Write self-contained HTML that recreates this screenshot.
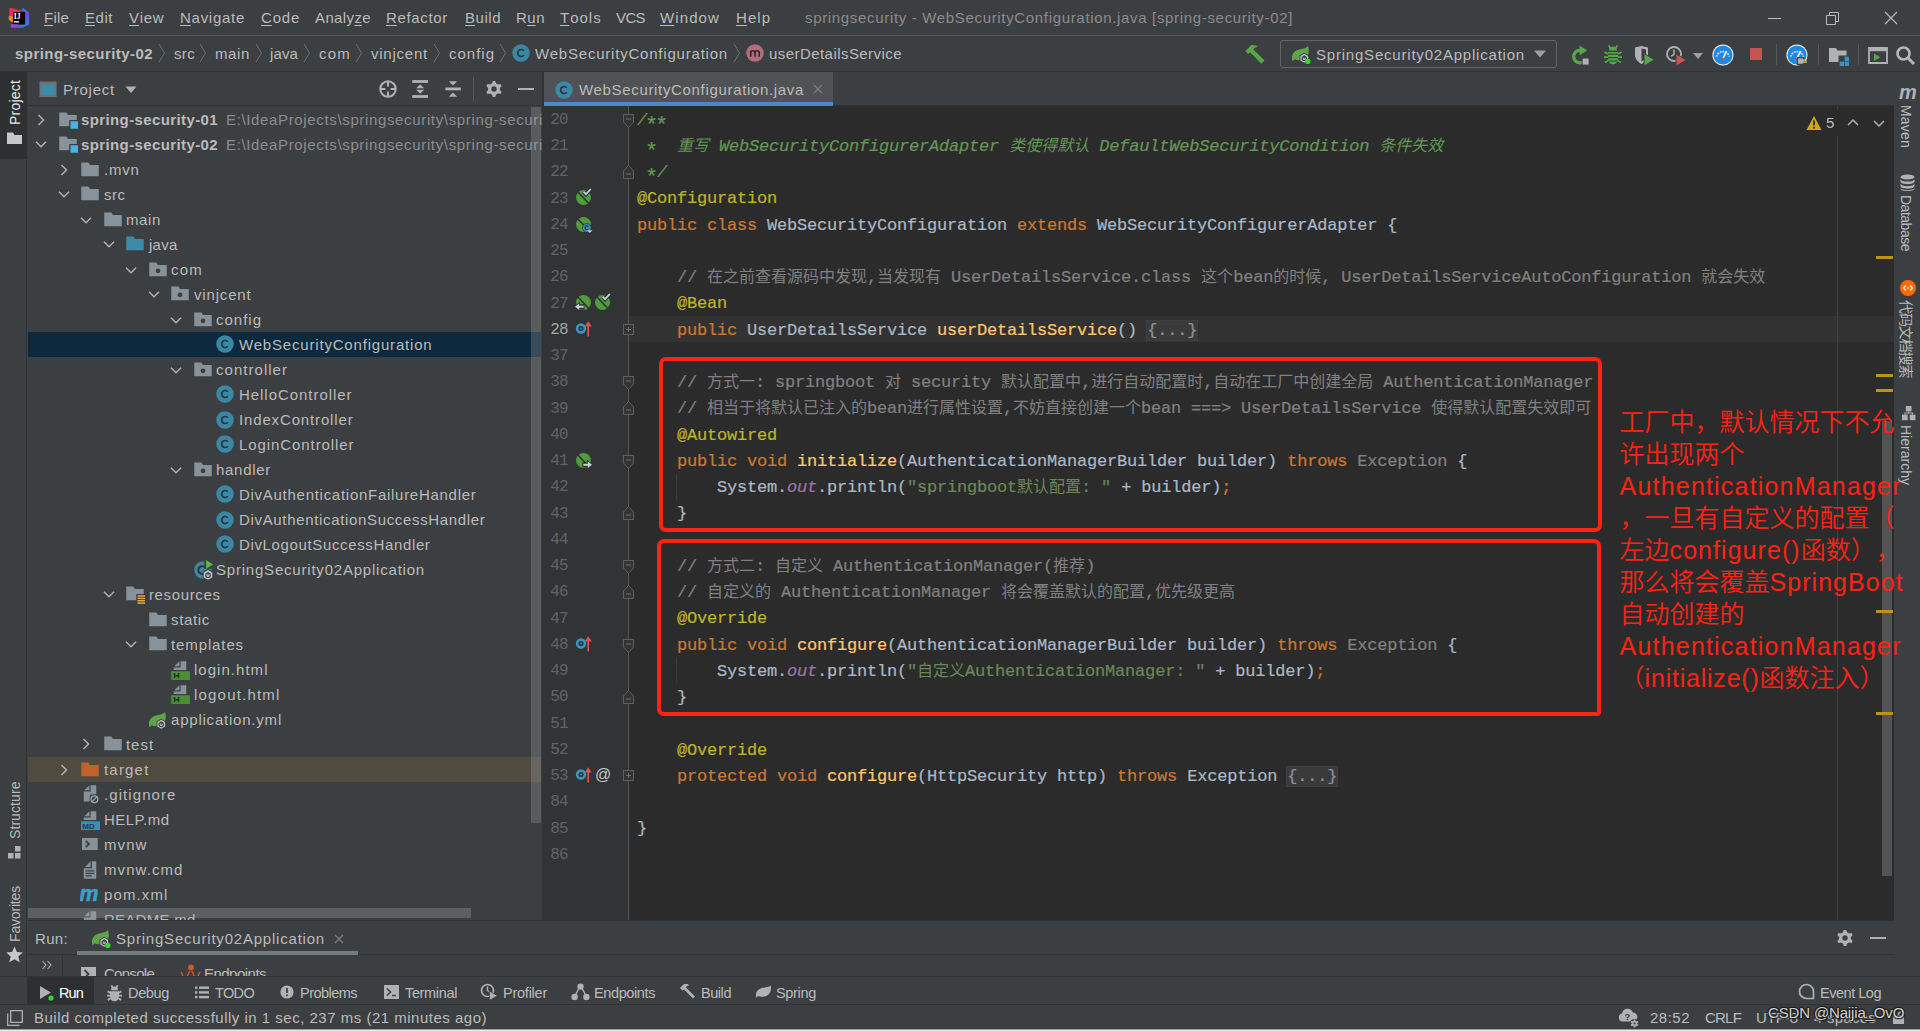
<!DOCTYPE html>
<html lang="zh"><head><meta charset="utf-8"><title>springsecurity - WebSecurityConfiguration.java</title>
<style>
html,body{margin:0;padding:0;background:#3c3f41;}
body{width:1920px;height:1031px;overflow:hidden;font-family:"Liberation Sans","Noto Sans CJK SC",sans-serif;color:#bbbbbb;}
#app{position:relative;width:1920px;height:1031px;overflow:hidden;background:#3c3f41;}
.b{position:absolute;display:block;}
.t{position:absolute;white-space:pre;display:block;}
.code{position:absolute;white-space:pre;font-family:"Liberation Mono","Noto Sans CJK SC",monospace;font-size:17px;letter-spacing:-0.2px;line-height:26px;color:#a9b7c6;}
.code .c{font-family:"Noto Sans CJK SC",sans-serif;font-size:16px;letter-spacing:0;}
.k{color:#cc7832}.a{color:#bbb529}.m{color:#ffc66d}.cm{color:#808080}.dc{color:#629755;font-style:italic}.s{color:#6a8759}.sf{color:#9876aa;font-style:italic}
.ln{position:absolute;font-family:"Liberation Mono",monospace;font-size:16px;letter-spacing:-1.0px;line-height:26px;color:#606366;text-align:right;width:40px;}
.clip{position:absolute;overflow:hidden;}
.code .c{line-height:1px}
.note{text-spacing-trim:space-all;font-kerning:none;font-family:"Liberation Sans","Noto Sans CJK SC",sans-serif;font-weight:350;font-size:25px;line-height:32px;color:#ff2314;}
.note .nl{letter-spacing:1.15px}
.code .ast{font-size:22px;letter-spacing:-3.2px;margin-left:-2px;margin-right:2px;position:relative;top:7px;line-height:1px;font-style:normal}
.code{-webkit-text-stroke:0.22px currentColor}
.code .c{-webkit-text-stroke:0}

</style></head><body>
<div id="app">
<div class="b" style="left:0px;top:0px;width:1920px;height:35px;background:#3c3f41;"></div>
<div class="b" style="left:0px;top:35px;width:1920px;height:1px;background:#555555;"></div>
<svg class="b" style="left:8px;top:7px;" width="22" height="22" viewBox="8 7 22 22"><defs><linearGradient id="lgb" x1="0" y1="0" x2="0.3" y2="1"><stop offset="0" stop-color="#3b7cf5"/><stop offset="0.5" stop-color="#6a4fe0"/><stop offset="1" stop-color="#2a7cf7"/></linearGradient>
<linearGradient id="lgp" x1="0" y1="0" x2="1" y2="0"><stop offset="0" stop-color="#b03ad8"/><stop offset="1" stop-color="#5b55ee"/></linearGradient></defs>
<path d="M9.2,8.4 L11.4,8 L20.8,10.4 L20.8,12 L13.6,16.6 L9.6,16.8 Z" fill="#fe2857"/>
<path d="M9,15.4 L8.6,19.6 L11.4,22 L13.4,21.6 L13.4,16.6 Z" fill="#fc801d"/>
<path d="M21,10.2 L23,8 L29,12.6 L29.2,24.4 L21.6,28 L17.6,25.6 L25.2,24.4 L25.2,12.2 Z" fill="url(#lgb)"/>
<path d="M11.2,24 L10.8,27.4 L21.6,28 L17.6,24 Z" fill="url(#lgp)"/>
<rect x="13" y="12.2" width="12" height="12" fill="#000"/><rect x="14" y="21.1" width="5" height="1.5" fill="#e8e8e8"/>
<text x="13.7" y="18.6" font-family="Liberation Serif,serif" font-size="7.6" font-weight="bold" fill="#fff">IJ</text></svg>
<span class="t" style="left:44px;top:7.2px;line-height:22px;font-size:15px;letter-spacing:0.207px;text-underline-offset:1.5px"><u style="letter-spacing:0;margin-right:0.207px">F</u>ile</span>
<span class="t" style="left:85px;top:7.2px;line-height:22px;font-size:15px;letter-spacing:0.538px;text-underline-offset:1.5px"><u style="letter-spacing:0;margin-right:0.538px">E</u>dit</span>
<span class="t" style="left:129px;top:7.2px;line-height:22px;font-size:15px;letter-spacing:0.690px;text-underline-offset:1.5px"><u style="letter-spacing:0;margin-right:0.690px">V</u>iew</span>
<span class="t" style="left:180px;top:7.2px;line-height:22px;font-size:15px;letter-spacing:0.725px;text-underline-offset:1.5px"><u style="letter-spacing:0;margin-right:0.725px">N</u>avigate</span>
<span class="t" style="left:261px;top:7.2px;line-height:22px;font-size:15px;letter-spacing:0.785px;text-underline-offset:1.5px"><u style="letter-spacing:0;margin-right:0.785px">C</u>ode</span>
<span class="t" style="left:315px;top:7.2px;line-height:22px;font-size:15px;letter-spacing:0.376px;text-underline-offset:1.5px">Analy<u style="letter-spacing:0;margin-right:0.376px">z</u>e</span>
<span class="t" style="left:386px;top:7.2px;line-height:22px;font-size:15px;letter-spacing:0.664px;text-underline-offset:1.5px"><u style="letter-spacing:0;margin-right:0.664px">R</u>efactor</span>
<span class="t" style="left:465px;top:7.2px;line-height:22px;font-size:15px;letter-spacing:0.529px;text-underline-offset:1.5px"><u style="letter-spacing:0;margin-right:0.529px">B</u>uild</span>
<span class="t" style="left:516px;top:7.2px;line-height:22px;font-size:15px;letter-spacing:0.494px;text-underline-offset:1.5px">R<u style="letter-spacing:0;margin-right:0.494px">u</u>n</span>
<span class="t" style="left:560px;top:7.2px;line-height:22px;font-size:15px;letter-spacing:0.997px;text-underline-offset:1.5px"><u style="letter-spacing:0;margin-right:0.997px">T</u>ools</span>
<span class="t" style="left:616px;top:7.2px;line-height:22px;font-size:15px;letter-spacing:-0.614px;text-underline-offset:1.5px">VCS</span>
<span class="t" style="left:660px;top:7.2px;line-height:22px;font-size:15px;letter-spacing:1.108px;text-underline-offset:1.5px"><u style="letter-spacing:0;margin-right:1.108px">W</u>indow</span>
<span class="t" style="left:736px;top:7.2px;line-height:22px;font-size:15px;letter-spacing:1.038px;text-underline-offset:1.5px"><u style="letter-spacing:0;margin-right:1.038px">H</u>elp</span>
<span class="t" style="left:805px;top:6.80px;line-height:22px;font-size:15px;color:#8c8c8c;letter-spacing:0.668px;">springsecurity - WebSecurityConfiguration.java [spring-security-02]</span>
<div class="b" style="left:1768px;top:18px;width:13px;height:1px;background:#bbbbbb;"></div>
<svg class="b" style="left:1825px;top:11px;" width="15" height="15" viewBox="0 0 15 15"><path fill="none" stroke="#bbbbbb" stroke-width="1" d="M1.5,4.5 H10.5 V13.5 H1.5 Z M4.5,4.5 V1.5 H13.5 V10.5 H10.5"/></svg>
<svg class="b" style="left:1884px;top:11px;" width="14" height="14" viewBox="0 0 14 14"><path fill="none" stroke="#bbbbbb" stroke-width="1.1" d="M1,1 L13,13 M13,1 L1,13"/></svg>
<div class="b" style="left:0px;top:36px;width:1920px;height:35px;background:#3c3f41;"></div>
<div class="b" style="left:0px;top:71px;width:1920px;height:1px;background:#323232;"></div>
<span class="t" style="left:15px;top:42.80px;line-height:22px;font-size:15px;font-weight:bold;letter-spacing:0.442px;">spring-security-02</span>
<svg class="b" style="left:157px;top:43px;" width="10" height="20" viewBox="0 0 10 20"><path fill="none" stroke="#6e7174" stroke-width="1" d="M2,1 L7.5,10 L2,19"/></svg>
<span class="t" style="left:174px;top:42.80px;line-height:22px;font-size:15px;letter-spacing:0.335px;">src</span>
<svg class="b" style="left:198px;top:43px;" width="10" height="20" viewBox="0 0 10 20"><path fill="none" stroke="#6e7174" stroke-width="1" d="M2,1 L7.5,10 L2,19"/></svg>
<span class="t" style="left:215px;top:42.80px;line-height:22px;font-size:15px;letter-spacing:0.622px;">main</span>
<svg class="b" style="left:254px;top:43px;" width="10" height="20" viewBox="0 0 10 20"><path fill="none" stroke="#6e7174" stroke-width="1" d="M2,1 L7.5,10 L2,19"/></svg>
<span class="t" style="left:270px;top:42.80px;line-height:22px;font-size:15px;letter-spacing:0.121px;">java</span>
<svg class="b" style="left:302px;top:43px;" width="10" height="20" viewBox="0 0 10 20"><path fill="none" stroke="#6e7174" stroke-width="1" d="M2,1 L7.5,10 L2,19"/></svg>
<span class="t" style="left:319px;top:42.80px;line-height:22px;font-size:15px;letter-spacing:1.221px;">com</span>
<svg class="b" style="left:354px;top:43px;" width="10" height="20" viewBox="0 0 10 20"><path fill="none" stroke="#6e7174" stroke-width="1" d="M2,1 L7.5,10 L2,19"/></svg>
<span class="t" style="left:371px;top:42.80px;line-height:22px;font-size:15px;letter-spacing:0.768px;">vinjcent</span>
<svg class="b" style="left:432px;top:43px;" width="10" height="20" viewBox="0 0 10 20"><path fill="none" stroke="#6e7174" stroke-width="1" d="M2,1 L7.5,10 L2,19"/></svg>
<span class="t" style="left:449px;top:42.80px;line-height:22px;font-size:15px;letter-spacing:0.995px;">config</span>
<svg class="b" style="left:498px;top:43px;" width="10" height="20" viewBox="0 0 10 20"><path fill="none" stroke="#6e7174" stroke-width="1" d="M2,1 L7.5,10 L2,19"/></svg>
<svg class="b" style="left:511px;top:43px" width="20" height="20" viewBox="0 0 16 16"><circle cx="8" cy="8" r="7" fill="#3a87a6"/><path fill="none" stroke="#2a3439" stroke-width="1.3" d="M10.3,6.2 A2.8,2.8 0 1 0 10.3,9.8"/></svg>
<span class="t" style="left:535px;top:42.80px;line-height:22px;font-size:15px;letter-spacing:0.792px;">WebSecurityConfiguration</span>
<svg class="b" style="left:732px;top:43px;" width="10" height="20" viewBox="0 0 10 20"><path fill="none" stroke="#6e7174" stroke-width="1" d="M2,1 L7.5,10 L2,19"/></svg>
<svg class="b" style="left:745px;top:43px" width="20" height="20" viewBox="0 0 16 16"><circle cx="8" cy="8" r="7" fill="#ad6d79"/><path fill="none" stroke="#33282b" stroke-width="1.3" d="M4.6,11 V6.2 M4.6,8 C4.6,5.6 8,5.6 8,8 V11 M8,8 C8,5.6 11.4,5.6 11.4,8 V11"/></svg>
<span class="t" style="left:769px;top:42.80px;line-height:22px;font-size:15px;letter-spacing:0.442px;">userDetailsService</span>
<svg class="b" style="left:1244px;top:44px;" width="22" height="22" viewBox="0 0 22 22"><path fill="#57a64a" d="M1.4,7 L7.4,1 L12.4,1.4 L13.6,3 L10.6,3.8 L9.4,5.6 L20.6,16.6 L17.4,19.8 L6.2,8.6 L4,10 Z"/></svg>
<div class="b" style="left:1280px;top:40px;width:275px;height:26px;border:1px solid #646464;border-radius:3px;background:#3c3f41"></div>
<svg class="b" style="left:1291px;top:44px" width="20" height="20" viewBox="0 0 16 16"><path fill="#5fa34a" d="M0.8,12.6 C0.2,7.4 3.4,4.6 8.4,4 C10.6,3.7 12.6,2.8 13.6,1.6 C14.8,5.4 14.2,9 12.2,11 C9.6,13.4 5.4,13.4 3,12.2 C2.4,12.8 1.8,13.4 1.2,13.8 Z"/><path fill="#3c3f41" d="M10.6,7 L14.4,9.2 V13.6 L10.6,15.8 L6.8,13.6 V9.2 Z"/><path fill="#b8c2c9" d="M10.6,7.8 L13.7,9.6 V13.2 L10.6,15 L7.5,13.2 V9.6 Z"/><circle cx="10.6" cy="11.6" r="1.7" fill="none" stroke="#3c3f41" stroke-width="0.9"/><rect x="10.15" y="9.2" width="0.9" height="2.4" fill="#3c3f41"/><circle cx="13.4" cy="13.9" r="2.2" fill="#2edb2e"/></svg>
<span class="t" style="left:1316px;top:43.80px;line-height:22px;font-size:15px;letter-spacing:0.792px;">SpringSecurity02Application</span>
<svg class="b" style="left:1533px;top:49px;" width="14" height="10" viewBox="0 0 14 10"><path fill="#9da0a2" d="M1,1.5 H13 L7,8.5 Z"/></svg>
<svg class="b" style="left:1570px;top:45px;" width="22" height="22" viewBox="0 0 22 22"><path fill="none" stroke="#57a64a" stroke-width="3.2" d="M14.6,15.6 A6.2,6.2 0 1 1 10.5,5.4"/><path fill="#57a64a" d="M9.6,0.4 L17.2,5.4 L9.6,10.4 Z"/><rect x="11.6" y="12.6" width="7" height="7" fill="#3c3f41"/><rect x="12.6" y="13.6" width="6" height="6" fill="#afb1b3"/></svg>
<svg class="b" style="left:1602px;top:44px;" width="22" height="22" viewBox="0 0 22 22"><g fill="#57a64a"><path d="M6,8 H16 V15 A5,5.4 0 0 1 6,15 Z"/><path d="M7,6.6 A4,4.2 0 0 1 15,6.6 Z"/></g><g stroke="#57a64a" stroke-width="1.7" fill="none"><path d="M6,10 L2.4,8 M16,10 L19.6,8 M6,13.2 H2 M16,13.2 H20 M6.4,16.4 L2.8,18.6 M15.6,16.4 L19.2,18.6 M8.2,4 L6.6,1.4 M13.8,4 L15.4,1.4"/></g><path stroke="#3c3f41" stroke-width="1.2" d="M6,10.2 H16 M6,13.6 H16 M6.6,17 H15.4"/></svg>
<svg class="b" style="left:1633px;top:45px;" width="22" height="22" viewBox="0 0 22 22"><path fill="#afb1b3" d="M2,2.5 L8.5,1 L15,2.5 V10 C15,14.5 11,17.6 8.5,19 C6,17.6 2,14.5 2,10 Z"/><path fill="#3c3f41" d="M8.5,3.4 L13,4.4 V10 C13,13 10.5,15.4 8.5,16.6 Z"/><path fill="#57a64a" d="M11,8.5 L21.5,14.75 L11,21 Z" stroke="#3c3f41" stroke-width="1"/></svg>
<svg class="b" style="left:1665px;top:45px;" width="22" height="22" viewBox="0 0 22 22"><circle cx="9" cy="9" r="7" fill="none" stroke="#afb1b3" stroke-width="1.8"/><path fill="none" stroke="#afb1b3" stroke-width="1.5" d="M9,4.5 V9.4 L6,11.4"/><path fill="#c75450" d="M11,8.8 L21.5,15 L11,21.2 Z" stroke="#3c3f41" stroke-width="1"/></svg>
<svg class="b" style="left:1692px;top:52px;" width="12" height="8" viewBox="0 0 12 8"><path fill="#9da0a2" d="M1,1 H11 L6,7 Z"/></svg>
<svg class="b" style="left:1712px;top:44px;" width="22" height="22" viewBox="0 0 22 22"><circle cx="11" cy="11" r="10.6" fill="#f4f8fb"/><circle cx="11" cy="11" r="9.6" fill="#1e88e5"/><path fill="none" stroke="#dbe9f7" stroke-width="1.6" stroke-dasharray="1.6 1.1" d="M4.6,12.6 A6.6,6.6 0 0 1 17.4,12.6"/><path d="M10.4,15.5 L14.6,7.2" stroke="#ffffff" stroke-width="1.6"/><circle cx="10.6" cy="15" r="1.4" fill="#e0443e"/></svg>
<div class="b" style="left:1750px;top:48px;width:12px;height:12px;background:#c75450;"></div>
<div class="b" style="left:1776px;top:44px;width:1px;height:21px;background:#555759;"></div>
<svg class="b" style="left:1786px;top:44px;" width="22" height="22" viewBox="0 0 22 22"><circle cx="11" cy="11" r="10.6" fill="#f4f8fb"/><circle cx="11" cy="11" r="9.6" fill="#1e88e5"/><path fill="none" stroke="#dbe9f7" stroke-width="1.6" stroke-dasharray="1.6 1.1" d="M4.6,12.6 A6.6,6.6 0 0 1 17.4,12.6"/><path d="M10.4,15.5 L14.6,7.2" stroke="#ffffff" stroke-width="1.6"/><circle cx="10.6" cy="15" r="1.4" fill="#e0443e"/><path fill="#3c3f41" d="M11,13 H17 L19,15 V19 L17,21 H11 Z"/><path fill="#afb1b3" d="M12,14.2 H16.6 L18,15.6 V18.4 L16.6,19.8 H12 Z"/><path stroke="#e8c46a" stroke-width="1.2" d="M18,16 H21 M18,18.2 H21"/></svg>
<div class="b" style="left:1818px;top:44px;width:1px;height:21px;background:#555759;"></div>
<svg class="b" style="left:1828px;top:45px;" width="22" height="22" viewBox="0 0 22 22"><path fill="#afb1b3" d="M1,3 H8 L9.6,5.5 H18.5 V10.5 H10.5 V17 H1 Z"/><g fill="#3592c4"><rect x="16.6" y="11.6" width="4.4" height="4.4"/><rect x="11.6" y="16.6" width="4.4" height="4.4"/><rect x="16.6" y="16.6" width="4.4" height="4.4"/></g></svg>
<div class="b" style="left:1858px;top:44px;width:1px;height:21px;background:#555759;"></div>
<svg class="b" style="left:1867px;top:45px;" width="22" height="22" viewBox="0 0 22 22"><path fill="none" stroke="#afb1b3" stroke-width="1.8" d="M2,3 H20 V18 H2 Z"/><rect x="2" y="3" width="18" height="3.2" fill="#afb1b3"/><path fill="#57a64a" d="M7,8.6 L13.4,12.3 L7,16 Z"/></svg>
<svg class="b" style="left:1894px;top:44px;" width="22" height="22" viewBox="0 0 22 22"><circle cx="9.5" cy="9.5" r="6" fill="none" stroke="#b4b7b9" stroke-width="2.6"/><path stroke="#b4b7b9" stroke-width="3" d="M14,14 L20,20"/></svg>
<div class="b" style="left:0px;top:72px;width:26px;height:905px;background:#3c3f41;"></div>
<div class="b" style="left:26px;top:72px;width:1px;height:905px;background:#323232;"></div>
<div class="b" style="left:0px;top:72px;width:27px;height:87px;background:#2d2f30;"></div>
<span class="t" style="left:15px;top:125px;font-size:14px;line-height:20px;letter-spacing:0.204px;color:#e8e8e8;transform-origin:0 0;transform:rotate(-90deg) translate(0,-10px)">Project</span>
<svg class="b" style="left:7px;top:131px;" width="15" height="14" viewBox="0 0 15 14"><path fill="#c5c7c8" d="M0,1.5 H6 L7.5,4 H15 V13 H0 Z"/></svg>
<span class="t" style="left:15px;top:838.5px;font-size:14px;line-height:20px;letter-spacing:0.078px;color:#bbbbbb;transform-origin:0 0;transform:rotate(-90deg) translate(0,-10px)">Structure</span>
<svg class="b" style="left:8px;top:846px;" width="13" height="13" viewBox="0 0 13 13"><g fill="#afb1b3"><rect x="7" y="0" width="5.5" height="5.5"/><rect x="0" y="7" width="5.5" height="5.5"/><rect x="7" y="7" width="5.5" height="5.5"/></g></svg>
<span class="t" style="left:15px;top:942px;font-size:14px;line-height:20px;letter-spacing:-0.175px;color:#bbbbbb;transform-origin:0 0;transform:rotate(-90deg) translate(0,-10px)">Favorites</span>
<svg class="b" style="left:6px;top:946px;" width="17" height="17" viewBox="0 0 17 17"><path fill="#c5c7c8" d="M8.5,0.5 L10.9,6 L16.8,6.5 L12.3,10.4 L13.7,16.3 L8.5,13.2 L3.3,16.3 L4.7,10.4 L0.2,6.5 L6.1,6 Z"/></svg>
<div class="b" style="left:1894px;top:72px;width:26px;height:905px;background:#3c3f41;"></div>
<span class="t" style="left:1899px;top:81px;font-size:20px;line-height:22px;font-style:italic;font-weight:bold;color:#afb1b3">m</span>
<span class="t" style="left:1906px;top:105px;font-size:14px;line-height:20px;letter-spacing:0.196px;color:#bbbbbb;transform-origin:0 0;transform:rotate(90deg) translate(0,-10px)">Maven</span>
<svg class="b" style="left:1900px;top:174px;" width="15" height="17" viewBox="0 0 15 17"><g fill="#afb1b3"><ellipse cx="7.5" cy="3" rx="7" ry="2.6"/><path d="M0.5,5 C0.5,8.4 14.5,8.4 14.5,5 V7.5 C14.5,11 0.5,11 0.5,7.5 Z"/><path d="M0.5,9.5 C0.5,13 14.5,13 14.5,9.5 V12 C14.5,15.5 0.5,15.5 0.5,12 Z"/><path d="M0.5,13.8 C0.5,17 14.5,17 14.5,13.8 V14.5 C14.5,18 0.5,18 0.5,14.5 Z"/></g></svg>
<span class="t" style="left:1906px;top:195px;font-size:14px;line-height:20px;letter-spacing:-0.491px;color:#bbbbbb;transform-origin:0 0;transform:rotate(90deg) translate(0,-10px)">Database</span>
<svg class="b" style="left:1900px;top:280px;" width="16" height="16" viewBox="0 0 16 16"><circle cx="8" cy="8" r="8" fill="#ff6a00"/><path fill="none" stroke="#fff" stroke-width="1.2" d="M6,5.5 L3.5,8 L6,10.5 M10,5.5 L12.5,8 L10,10.5 M7,8 H9"/></svg>
<span class="t" style="left:1906px;top:300px;font-size:14px;line-height:20px;letter-spacing:-1.1px;color:#bbbbbb;font-family:'Liberation Sans','Noto Sans CJK SC',sans-serif;transform-origin:0 0;transform:rotate(90deg) translate(0,-10px)">代码文档搜索</span>
<svg class="b" style="left:1902px;top:406px;" width="14" height="15" viewBox="0 0 14 15"><g fill="#afb1b3"><rect x="3.8" y="0" width="5.7" height="5.3"/><rect x="0" y="8.6" width="5.7" height="5.6"/><rect x="7.7" y="8.6" width="5.7" height="5.6"/></g><path fill="none" stroke="#afb1b3" stroke-width="1.1" d="M6.65,5.3 V7 M2.85,8.6 V7 H10.55 V8.6"/></svg>
<span class="t" style="left:1906px;top:425px;font-size:14px;line-height:20px;letter-spacing:0.011px;color:#bbbbbb;transform-origin:0 0;transform:rotate(90deg) translate(0,-10px)">Hierarchy</span>
<div class="b" style="left:27px;top:72px;width:515px;height:33px;background:#3c3f41;"></div>
<div class="b" style="left:27px;top:105px;width:515px;height:1px;background:#323232;"></div>
<svg class="b" style="left:39px;top:81px;" width="18" height="17" viewBox="0 0 18 17"><rect x="0.5" y="0.5" width="17" height="15.5" fill="#6b7479" /><rect x="2.5" y="4" width="13" height="10" fill="#3d8ba8"/></svg>
<span class="t" style="left:63px;top:78.80px;line-height:22px;font-size:15px;letter-spacing:0.759px;">Project</span>
<svg class="b" style="left:124px;top:85px;" width="14" height="10" viewBox="0 0 14 10"><path fill="#afb1b3" d="M1.5,1.5 H12.5 L7,8 Z"/></svg>
<svg class="b" style="left:378px;top:79px;" width="20" height="20" viewBox="0 0 20 20"><circle cx="10" cy="10" r="7.7" fill="none" stroke="#afb1b3" stroke-width="2.1"/><path stroke="#afb1b3" stroke-width="2.1" d="M10,2.5 V7.4 M10,12.6 V17.5 M2.5,10 H7.4 M12.6,10 H17.5"/></svg>
<svg class="b" style="left:411px;top:79px;" width="19" height="20" viewBox="0 0 19 20"><g fill="#afb1b3"><rect x="1.2" y="1.1" width="15.8" height="2.8"/><rect x="1.2" y="16.1" width="15.8" height="2.8"/><path d="M9.1,5.3 L13.1,9.2 H5.1 Z M9.1,14.7 L13.1,10.8 H5.1 Z"/></g></svg>
<svg class="b" style="left:444px;top:79px;" width="19" height="20" viewBox="0 0 19 20"><g fill="#afb1b3"><rect x="1.4" y="8.5" width="15.4" height="2.8"/><path d="M9,6.4 L13.2,2.2 H4.8 Z M9,13.4 L13.2,17.8 H4.8 Z"/></g></svg>
<div class="b" style="left:473px;top:77px;width:1px;height:24px;background:#555759;"></div>
<svg class="b" style="left:485px;top:80px;" width="18" height="18" viewBox="0 0 18 18"><path fill="#afb1b3" d="M7.03,3.33 L7.78,0.89 L10.22,0.89 L10.97,3.33 L12.92,4.46 L15.41,3.89 L16.63,6.00 L14.89,7.88 L14.89,10.12 L16.63,12.00 L15.41,14.11 L12.92,13.54 L10.97,14.67 L10.22,17.11 L7.78,17.11 L7.03,14.67 L5.08,13.54 L2.59,14.11 L1.37,12.00 L3.11,10.12 L3.11,7.88 L1.37,6.00 L2.59,3.89 L5.08,4.46 Z"/><circle cx="9" cy="9" r="2.7" fill="#3c3f41"/></svg>
<div class="b" style="left:518px;top:87.6px;width:15.6px;height:2.8px;background:#afb1b3;"></div>
<div class="b" style="left:542px;top:72px;width:1352px;height:33px;background:#3c3f41;"></div>
<div class="b" style="left:542px;top:105px;width:1352px;height:1px;background:#323232;"></div>
<div class="b" style="left:542px;top:72px;width:2px;height:34px;background:#2f3133;"></div>
<div class="b" style="left:544px;top:72px;width:289px;height:30px;background:#4e5254;"></div>
<div class="b" style="left:544px;top:102px;width:289px;height:4px;background:#4a88c7;"></div>
<svg class="b" style="left:554px;top:80px" width="20" height="20" viewBox="0 0 16 16"><circle cx="8" cy="8" r="7" fill="#3a87a6"/><path fill="none" stroke="#2a3439" stroke-width="1.3" d="M10.3,6.2 A2.8,2.8 0 1 0 10.3,9.8"/></svg>
<span class="t" style="left:579px;top:78.80px;line-height:22px;font-size:15px;letter-spacing:0.667px;">WebSecurityConfiguration.java</span>
<svg class="b" style="left:812px;top:83px;" width="12" height="12" viewBox="0 0 12 12"><path fill="none" stroke="#7a7e80" stroke-width="1.2" d="M2,2 L10,10 M10,2 L2,10"/></svg>
<div class="b" style="left:27px;top:106px;width:515px;height:814px;background:#3c3f41;"></div>
<div class="clip" style="left:28px;top:106px;width:514px;height:814px">
<svg class="b" style="left:3px;top:4px" width="20" height="20" viewBox="0 0 16 16"><path fill="none" stroke="#afb1b3" stroke-width="1.2" d="M6,4 L10,8 L6,12"/></svg>
<svg class="b" style="left:29.5px;top:4px" width="20" height="20" viewBox="0 0 16 16"><path fill="#87929a" d="M1,2 L6.7,2 L7.98,4 L15,4 L15,8 L9,8 L9,13 L1,13 Z"/><rect x="10" y="9" width="6" height="6" fill="#40b6e0"/></svg>
<span class="t" style="left:53px;top:3.30px;line-height:22px;font-size:15px;font-weight:bold;letter-spacing:0.387px;">spring-security-01</span>
<span class="t" style="left:198px;top:3.30px;line-height:22px;font-size:15px;color:#8a8d8f;letter-spacing:0.647px;">E:\IdeaProjects\springsecurity\spring-security-01</span>
<svg class="b" style="left:3px;top:28px" width="20" height="20" viewBox="0 0 16 16"><path fill="none" stroke="#afb1b3" stroke-width="1.2" d="M4,6.2 L8,10.2 L12,6.2"/></svg>
<svg class="b" style="left:29.5px;top:28px" width="20" height="20" viewBox="0 0 16 16"><path fill="#87929a" d="M1,2 L6.7,2 L7.98,4 L15,4 L15,8 L9,8 L9,13 L1,13 Z"/><rect x="10" y="9" width="6" height="6" fill="#40b6e0"/></svg>
<span class="t" style="left:53px;top:28.30px;line-height:22px;font-size:15px;font-weight:bold;letter-spacing:0.387px;">spring-security-02</span>
<span class="t" style="left:198px;top:28.30px;line-height:22px;font-size:15px;color:#8a8d8f;letter-spacing:0.647px;">E:\IdeaProjects\springsecurity\spring-security-02</span>
<svg class="b" style="left:26px;top:54px" width="20" height="20" viewBox="0 0 16 16"><path fill="none" stroke="#afb1b3" stroke-width="1.2" d="M6,4 L10,8 L6,12"/></svg>
<svg class="b" style="left:51.5px;top:54px" width="20" height="20" viewBox="0 0 16 16"><path fill="#87929a" d="M1,13 L15,13 L15,4 L7.98,4 L6.7,2 L1,2 Z"/></svg>
<span class="t" style="left:76px;top:53.30px;line-height:22px;font-size:15px;letter-spacing:0.749px;">.mvn</span>
<svg class="b" style="left:26px;top:78px" width="20" height="20" viewBox="0 0 16 16"><path fill="none" stroke="#afb1b3" stroke-width="1.2" d="M4,6.2 L8,10.2 L12,6.2"/></svg>
<svg class="b" style="left:51.5px;top:78px" width="20" height="20" viewBox="0 0 16 16"><path fill="#87929a" d="M1,13 L15,13 L15,4 L7.98,4 L6.7,2 L1,2 Z"/></svg>
<span class="t" style="left:76px;top:78.30px;line-height:22px;font-size:15px;letter-spacing:0.502px;">src</span>
<svg class="b" style="left:48px;top:104px" width="20" height="20" viewBox="0 0 16 16"><path fill="none" stroke="#afb1b3" stroke-width="1.2" d="M4,6.2 L8,10.2 L12,6.2"/></svg>
<svg class="b" style="left:74.5px;top:104px" width="20" height="20" viewBox="0 0 16 16"><path fill="#87929a" d="M1,13 L15,13 L15,4 L7.98,4 L6.7,2 L1,2 Z"/></svg>
<span class="t" style="left:98px;top:103.30px;line-height:22px;font-size:15px;letter-spacing:0.622px;">main</span>
<svg class="b" style="left:71px;top:128px" width="20" height="20" viewBox="0 0 16 16"><path fill="none" stroke="#afb1b3" stroke-width="1.2" d="M4,6.2 L8,10.2 L12,6.2"/></svg>
<svg class="b" style="left:96.5px;top:128px" width="20" height="20" viewBox="0 0 16 16"><path fill="#3d8aaa" d="M1,13 L15,13 L15,4 L7.98,4 L6.7,2 L1,2 Z"/></svg>
<span class="t" style="left:121px;top:128.30px;line-height:22px;font-size:15px;letter-spacing:0.246px;">java</span>
<svg class="b" style="left:93px;top:154px" width="20" height="20" viewBox="0 0 16 16"><path fill="none" stroke="#afb1b3" stroke-width="1.2" d="M4,6.2 L8,10.2 L12,6.2"/></svg>
<svg class="b" style="left:119.5px;top:154px" width="20" height="20" viewBox="0 0 16 16"><path fill="#87929a" d="M1,13 L15,13 L15,4 L7.98,4 L6.7,2 L1,2 Z"/><circle cx="8" cy="8.6" r="1.9" fill="#3c3f41"/></svg>
<span class="t" style="left:143px;top:153.30px;line-height:22px;font-size:15px;letter-spacing:1.221px;">com</span>
<svg class="b" style="left:116px;top:178px" width="20" height="20" viewBox="0 0 16 16"><path fill="none" stroke="#afb1b3" stroke-width="1.2" d="M4,6.2 L8,10.2 L12,6.2"/></svg>
<svg class="b" style="left:141.5px;top:178px" width="20" height="20" viewBox="0 0 16 16"><path fill="#87929a" d="M1,13 L15,13 L15,4 L7.98,4 L6.7,2 L1,2 Z"/><circle cx="8" cy="8.6" r="1.9" fill="#3c3f41"/></svg>
<span class="t" style="left:166px;top:178.30px;line-height:22px;font-size:15px;letter-spacing:0.830px;">vinjcent</span>
<svg class="b" style="left:138px;top:204px" width="20" height="20" viewBox="0 0 16 16"><path fill="none" stroke="#afb1b3" stroke-width="1.2" d="M4,6.2 L8,10.2 L12,6.2"/></svg>
<svg class="b" style="left:164.5px;top:204px" width="20" height="20" viewBox="0 0 16 16"><path fill="#87929a" d="M1,13 L15,13 L15,4 L7.98,4 L6.7,2 L1,2 Z"/><circle cx="8" cy="8.6" r="1.9" fill="#3c3f41"/></svg>
<span class="t" style="left:188px;top:203.30px;line-height:22px;font-size:15px;letter-spacing:0.995px;">config</span>
<div class="b" style="left:0px;top:226px;width:513px;height:25px;background:#0d293e;"></div>
<svg class="b" style="left:187px;top:228px" width="20" height="20" viewBox="0 0 16 16"><circle cx="8" cy="8" r="7" fill="#3a87a6"/><path fill="none" stroke="#2a3439" stroke-width="1.3" d="M10.3,6.2 A2.8,2.8 0 1 0 10.3,9.8"/></svg>
<span class="t" style="left:211px;top:228.30px;line-height:22px;font-size:15px;letter-spacing:0.813px;">WebSecurityConfiguration</span>
<svg class="b" style="left:138px;top:254px" width="20" height="20" viewBox="0 0 16 16"><path fill="none" stroke="#afb1b3" stroke-width="1.2" d="M4,6.2 L8,10.2 L12,6.2"/></svg>
<svg class="b" style="left:164.5px;top:254px" width="20" height="20" viewBox="0 0 16 16"><path fill="#87929a" d="M1,13 L15,13 L15,4 L7.98,4 L6.7,2 L1,2 Z"/><circle cx="8" cy="8.6" r="1.9" fill="#3c3f41"/></svg>
<span class="t" style="left:188px;top:253.30px;line-height:22px;font-size:15px;letter-spacing:1.031px;">controller</span>
<svg class="b" style="left:187px;top:278px" width="20" height="20" viewBox="0 0 16 16"><circle cx="8" cy="8" r="7" fill="#3a87a6"/><path fill="none" stroke="#2a3439" stroke-width="1.3" d="M10.3,6.2 A2.8,2.8 0 1 0 10.3,9.8"/></svg>
<span class="t" style="left:211px;top:278.30px;line-height:22px;font-size:15px;letter-spacing:0.953px;">HelloController</span>
<svg class="b" style="left:187px;top:304px" width="20" height="20" viewBox="0 0 16 16"><circle cx="8" cy="8" r="7" fill="#3a87a6"/><path fill="none" stroke="#2a3439" stroke-width="1.3" d="M10.3,6.2 A2.8,2.8 0 1 0 10.3,9.8"/></svg>
<span class="t" style="left:211px;top:303.30px;line-height:22px;font-size:15px;letter-spacing:0.852px;">IndexController</span>
<svg class="b" style="left:187px;top:328px" width="20" height="20" viewBox="0 0 16 16"><circle cx="8" cy="8" r="7" fill="#3a87a6"/><path fill="none" stroke="#2a3439" stroke-width="1.3" d="M10.3,6.2 A2.8,2.8 0 1 0 10.3,9.8"/></svg>
<span class="t" style="left:211px;top:328.30px;line-height:22px;font-size:15px;letter-spacing:0.918px;">LoginController</span>
<svg class="b" style="left:138px;top:354px" width="20" height="20" viewBox="0 0 16 16"><path fill="none" stroke="#afb1b3" stroke-width="1.2" d="M4,6.2 L8,10.2 L12,6.2"/></svg>
<svg class="b" style="left:164.5px;top:354px" width="20" height="20" viewBox="0 0 16 16"><path fill="#87929a" d="M1,13 L15,13 L15,4 L7.98,4 L6.7,2 L1,2 Z"/><circle cx="8" cy="8.6" r="1.9" fill="#3c3f41"/></svg>
<span class="t" style="left:188px;top:353.30px;line-height:22px;font-size:15px;letter-spacing:0.709px;">handler</span>
<svg class="b" style="left:187px;top:378px" width="20" height="20" viewBox="0 0 16 16"><circle cx="8" cy="8" r="7" fill="#3a87a6"/><path fill="none" stroke="#2a3439" stroke-width="1.3" d="M10.3,6.2 A2.8,2.8 0 1 0 10.3,9.8"/></svg>
<span class="t" style="left:211px;top:378.30px;line-height:22px;font-size:15px;letter-spacing:0.722px;">DivAuthenticationFailureHandler</span>
<svg class="b" style="left:187px;top:404px" width="20" height="20" viewBox="0 0 16 16"><circle cx="8" cy="8" r="7" fill="#3a87a6"/><path fill="none" stroke="#2a3439" stroke-width="1.3" d="M10.3,6.2 A2.8,2.8 0 1 0 10.3,9.8"/></svg>
<span class="t" style="left:211px;top:403.30px;line-height:22px;font-size:15px;letter-spacing:0.663px;">DivAuthenticationSuccessHandler</span>
<svg class="b" style="left:187px;top:428px" width="20" height="20" viewBox="0 0 16 16"><circle cx="8" cy="8" r="7" fill="#3a87a6"/><path fill="none" stroke="#2a3439" stroke-width="1.3" d="M10.3,6.2 A2.8,2.8 0 1 0 10.3,9.8"/></svg>
<span class="t" style="left:211px;top:428.30px;line-height:22px;font-size:15px;letter-spacing:0.641px;">DivLogoutSuccessHandler</span>
<svg class="b" style="left:164.5px;top:454px" width="20" height="20" viewBox="0 0 16 16"><path fill="#3e86a0" d="M8,1 A7,7 0 1 0 15,8 L15,7 L9,7 L9,1.1 Z"/><path fill="none" stroke="#2a3439" stroke-width="1.5" d="M9.6,5.9 A3.1,3.1 0 1 0 9.6,10.1"/><path fill="#62b543" d="M10.5,0 L16,3.5 L10.5,7 Z"/><path fill="#3c3f41" d="M12,7 L16.2,9.4 V14.4 L12,16.8 L7.8,14.4 V9.4 Z"/><path fill="#b8c2c9" d="M12,8 L15.4,9.9 V13.9 L12,15.8 L8.6,13.9 V9.9 Z"/><circle cx="12" cy="12.2" r="1.8" fill="none" stroke="#3c3f41" stroke-width="0.9"/><rect x="11.55" y="9.7" width="0.9" height="2.5" fill="#3c3f41"/></svg>
<span class="t" style="left:188px;top:453.30px;line-height:22px;font-size:15px;letter-spacing:0.792px;">SpringSecurity02Application</span>
<svg class="b" style="left:71px;top:478px" width="20" height="20" viewBox="0 0 16 16"><path fill="none" stroke="#afb1b3" stroke-width="1.2" d="M4,6.2 L8,10.2 L12,6.2"/></svg>
<svg class="b" style="left:97px;top:478px" width="20" height="20" viewBox="0 0 16 16"><path fill="#87929a" d="M1,2 L6.7,2 L7.98,4 L15,4 L15,8 L9,8 L9,13 L1,13 Z"/><g fill="#e8a33e"><rect x="10" y="9" width="6" height="1.2"/><rect x="10" y="10.9" width="6" height="1.2"/><rect x="10" y="12.8" width="6" height="1.2"/><rect x="10" y="14.7" width="6" height="1.2"/></g></svg>
<span class="t" style="left:121px;top:478.30px;line-height:22px;font-size:15px;letter-spacing:0.627px;">resources</span>
<svg class="b" style="left:119.5px;top:504px" width="20" height="20" viewBox="0 0 16 16"><path fill="#87929a" d="M1,13 L15,13 L15,4 L7.98,4 L6.7,2 L1,2 Z"/></svg>
<span class="t" style="left:143px;top:503.30px;line-height:22px;font-size:15px;letter-spacing:0.665px;">static</span>
<svg class="b" style="left:93px;top:528px" width="20" height="20" viewBox="0 0 16 16"><path fill="none" stroke="#afb1b3" stroke-width="1.2" d="M4,6.2 L8,10.2 L12,6.2"/></svg>
<svg class="b" style="left:119.5px;top:528px" width="20" height="20" viewBox="0 0 16 16"><path fill="#87929a" d="M1,13 L15,13 L15,4 L7.98,4 L6.7,2 L1,2 Z"/></svg>
<span class="t" style="left:143px;top:528.30px;line-height:22px;font-size:15px;letter-spacing:0.885px;">templates</span>
<svg class="b" style="left:142px;top:554px" width="20" height="20" viewBox="0 0 16 16"><path fill="#87929a" d="M7.5,1 L7.5,5 L3.5,5 Z"/><path fill="#87929a" d="M8.5,1 L13,1 L13,8 L3,8 L3,6 L8.5,6 Z"/><rect x="1" y="9" width="15" height="7" fill="#4b8c39"/><path fill="none" stroke="#23381e" stroke-width="1.2" d="M3.6,10.4 V14.6 M6.8,10.4 V14.6 M3.6,12.5 H6.8"/></svg>
<span class="t" style="left:166px;top:553.30px;line-height:22px;font-size:15px;letter-spacing:1.030px;">login.html</span>
<svg class="b" style="left:142px;top:578px" width="20" height="20" viewBox="0 0 16 16"><path fill="#87929a" d="M7.5,1 L7.5,5 L3.5,5 Z"/><path fill="#87929a" d="M8.5,1 L13,1 L13,8 L3,8 L3,6 L8.5,6 Z"/><rect x="1" y="9" width="15" height="7" fill="#4b8c39"/><path fill="none" stroke="#23381e" stroke-width="1.2" d="M3.6,10.4 V14.6 M6.8,10.4 V14.6 M3.6,12.5 H6.8"/></svg>
<span class="t" style="left:166px;top:578.30px;line-height:22px;font-size:15px;letter-spacing:1.193px;">logout.html</span>
<svg class="b" style="left:119.5px;top:604px" width="20" height="20" viewBox="0 0 16 16"><path fill="#5fa34a" d="M0.8,12.6 C0.2,7.4 3.4,4.6 8.4,4 C10.6,3.7 12.6,2.8 13.6,1.6 C14.8,5.4 14.2,9 12.2,11 C9.6,13.4 5.4,13.4 3,12.2 C2.4,12.8 1.8,13.4 1.2,13.8 Z"/><path fill="#3c3f41" d="M10.6,7 L14.4,9.2 V13.6 L10.6,15.8 L6.8,13.6 V9.2 Z"/><path fill="#b8c2c9" d="M10.6,7.8 L13.7,9.6 V13.2 L10.6,15 L7.5,13.2 V9.6 Z"/><circle cx="10.6" cy="11.6" r="1.7" fill="none" stroke="#3c3f41" stroke-width="0.9"/><rect x="10.15" y="9.2" width="0.9" height="2.4" fill="#3c3f41"/></svg>
<span class="t" style="left:143px;top:603.30px;line-height:22px;font-size:15px;letter-spacing:0.786px;">application.yml</span>
<svg class="b" style="left:48px;top:628px" width="20" height="20" viewBox="0 0 16 16"><path fill="none" stroke="#afb1b3" stroke-width="1.2" d="M6,4 L10,8 L6,12"/></svg>
<svg class="b" style="left:74.5px;top:628px" width="20" height="20" viewBox="0 0 16 16"><path fill="#87929a" d="M1,13 L15,13 L15,4 L7.98,4 L6.7,2 L1,2 Z"/></svg>
<span class="t" style="left:98px;top:628.30px;line-height:22px;font-size:15px;letter-spacing:0.956px;">test</span>
<div class="b" style="left:0px;top:651px;width:513px;height:25px;background:#4f4b41;"></div>
<svg class="b" style="left:26px;top:654px" width="20" height="20" viewBox="0 0 16 16"><path fill="none" stroke="#afb1b3" stroke-width="1.2" d="M6,4 L10,8 L6,12"/></svg>
<svg class="b" style="left:51.5px;top:654px" width="20" height="20" viewBox="0 0 16 16"><path fill="#c4602b" d="M1,13 L15,13 L15,4 L7.98,4 L6.7,2 L1,2 Z"/></svg>
<span class="t" style="left:76px;top:653.30px;line-height:22px;font-size:15px;letter-spacing:1.190px;">target</span>
<svg class="b" style="left:51.5px;top:678px" width="20" height="20" viewBox="0 0 16 16"><path fill="#87929a" d="M7.5,1 L7.5,5 L3.5,5 Z"/><path fill="#87929a" d="M8.5,1 L13,1 L13,8 L8,8.5 L7.5,14 L3,14 L3,6 L8.5,6 Z"/><circle cx="11.5" cy="12.2" r="2.7" fill="none" stroke="#9aa5ad" stroke-width="1.1"/><path stroke="#9aa5ad" stroke-width="1.1" d="M9.6,14.1 L13.4,10.3"/></svg>
<span class="t" style="left:76px;top:678.30px;line-height:22px;font-size:15px;letter-spacing:1.079px;">.gitignore</span>
<svg class="b" style="left:51.5px;top:704px" width="20" height="20" viewBox="0 0 16 16"><path fill="#87929a" d="M7.5,1 L7.5,5 L3.5,5 Z"/><path fill="#87929a" d="M8.5,1 L13,1 L13,8 L3,8 L3,6 L8.5,6 Z"/><rect x="0.8" y="9" width="15.2" height="7" fill="#3a8fb5"/><text x="1.8" y="14.8" font-family="Liberation Sans,sans-serif" font-size="6.4" font-weight="bold" fill="#1d3a48">MD</text></svg>
<span class="t" style="left:76px;top:703.30px;line-height:22px;font-size:15px;letter-spacing:0.463px;">HELP.md</span>
<svg class="b" style="left:51.5px;top:728px" width="20" height="20" viewBox="0 0 16 16"><rect x="1.6" y="3.2" width="12.6" height="9.6" fill="#87929a"/><path fill="none" stroke="#3c3f41" stroke-width="1.5" d="M4.6,5.6 L7.2,8 L4.6,10.4"/></svg>
<span class="t" style="left:76px;top:728.30px;line-height:22px;font-size:15px;letter-spacing:1.082px;">mvnw</span>
<svg class="b" style="left:51.5px;top:754px" width="20" height="20" viewBox="0 0 16 16"><path fill="#87929a" d="M8.5,1 L8.5,5.5 L4,5.5 Z"/><path fill="#87929a" d="M9.5,1 L13,1 L13,15 L3,15 L3,6.5 L9.5,6.5 Z"/><g fill="#3c3f41"><rect x="4.5" y="8.2" width="7" height="1"/><rect x="4.5" y="10.2" width="7" height="1"/><rect x="4.5" y="12.2" width="5" height="1"/></g></svg>
<span class="t" style="left:76px;top:753.30px;line-height:22px;font-size:15px;letter-spacing:1.082px;">mvnw.cmd</span>
<svg class="b" style="left:51.5px;top:778px" width="20" height="20" viewBox="0 0 16 16"><text x="-0.5" y="13.6" font-family="Liberation Sans,sans-serif" font-size="17" font-style="italic" font-weight="bold" fill="#3d9ec6" stroke="#3d9ec6" stroke-width="0.5">m</text></svg>
<span class="t" style="left:76px;top:778.30px;line-height:22px;font-size:15px;letter-spacing:1.118px;">pom.xml</span>
<svg class="b" style="left:51.5px;top:804px" width="20" height="20" viewBox="0 0 16 16"><path fill="#87929a" d="M7.5,1 L7.5,5 L3.5,5 Z"/><path fill="#87929a" d="M8.5,1 L13,1 L13,8 L3,8 L3,6 L8.5,6 Z"/><rect x="0.8" y="9" width="15.2" height="7" fill="#3a8fb5"/><text x="1.8" y="14.8" font-family="Liberation Sans,sans-serif" font-size="6.4" font-weight="bold" fill="#1d3a48">MD</text></svg>
<span class="t" style="left:76px;top:803.30px;line-height:22px;font-size:15px;letter-spacing:0.258px;">README.md</span>
<div class="b" style="left:503px;top:1px;width:10px;height:716px;background:rgba(166,168,170,0.28);"></div>
<div class="b" style="left:0px;top:802px;width:443px;height:10px;background:rgba(166,168,170,0.3);"></div>
</div>
<div class="b" style="left:542px;top:106px;width:1352px;height:814px;background:#2b2b2b;"></div>
<div class="b" style="left:542px;top:106px;width:86px;height:814px;background:#313335;"></div>
<div class="b" style="left:629px;top:316px;width:1265px;height:26px;background:#323232;"></div>
<div class="b" style="left:628px;top:106px;width:1px;height:814px;background:#555555;"></div>
<div class="b" style="left:1837px;top:106px;width:1px;height:814px;background:#424242;"></div>
<span class="ln" style="left:527.5px;top:106.80px;color:#606366">20</span>
<span class="ln" style="left:527.5px;top:133.05px;color:#606366">21</span>
<span class="ln" style="left:527.5px;top:159.30px;color:#606366">22</span>
<span class="ln" style="left:527.5px;top:185.55px;color:#606366">23</span>
<span class="ln" style="left:527.5px;top:211.80px;color:#606366">24</span>
<span class="ln" style="left:527.5px;top:238.05px;color:#606366">25</span>
<span class="ln" style="left:527.5px;top:264.30px;color:#606366">26</span>
<span class="ln" style="left:527.5px;top:290.55px;color:#606366">27</span>
<span class="ln" style="left:527.5px;top:316.80px;color:#a4a3a3">28</span>
<span class="ln" style="left:527.5px;top:343.05px;color:#606366">37</span>
<span class="ln" style="left:527.5px;top:369.30px;color:#606366">38</span>
<span class="ln" style="left:527.5px;top:395.55px;color:#606366">39</span>
<span class="ln" style="left:527.5px;top:421.80px;color:#606366">40</span>
<span class="ln" style="left:527.5px;top:448.05px;color:#606366">41</span>
<span class="ln" style="left:527.5px;top:474.30px;color:#606366">42</span>
<span class="ln" style="left:527.5px;top:500.55px;color:#606366">43</span>
<span class="ln" style="left:527.5px;top:526.80px;color:#606366">44</span>
<span class="ln" style="left:527.5px;top:553.05px;color:#606366">45</span>
<span class="ln" style="left:527.5px;top:579.30px;color:#606366">46</span>
<span class="ln" style="left:527.5px;top:605.55px;color:#606366">47</span>
<span class="ln" style="left:527.5px;top:631.80px;color:#606366">48</span>
<span class="ln" style="left:527.5px;top:658.05px;color:#606366">49</span>
<span class="ln" style="left:527.5px;top:684.30px;color:#606366">50</span>
<span class="ln" style="left:527.5px;top:710.55px;color:#606366">51</span>
<span class="ln" style="left:527.5px;top:736.80px;color:#606366">52</span>
<span class="ln" style="left:527.5px;top:763.05px;color:#606366">53</span>
<span class="ln" style="left:527.5px;top:789.30px;color:#606366">84</span>
<span class="ln" style="left:527.5px;top:815.55px;color:#606366">85</span>
<span class="ln" style="left:527.5px;top:841.80px;color:#606366">86</span>
<div class="code" style="left:637px;top:107.50px"><span class="dc">/<span class="ast">*</span><span class="ast">*</span></span></div>
<div class="code" style="left:637px;top:133.75px"><span class="dc"> <span class="ast">*</span>  <span class="c">重写</span> WebSecurityConfigurerAdapter <span class="c">类使得默认</span> DefaultWebSecurityCondition <span class="c">条件失效</span></span></div>
<div class="code" style="left:637px;top:160.00px"><span class="dc"> <span class="ast">*</span>/</span></div>
<div class="code" style="left:637px;top:186.25px"><span class="a">@Configuration</span></div>
<div class="code" style="left:637px;top:212.50px"><span class="k">public class </span>WebSecurityConfiguration <span class="k">extends </span>WebSecurityConfigurerAdapter {</div>
<div class="code" style="left:637px;top:265.00px"><span class="cm">    // <span class="c">在之前查看源码中发现</span>,<span class="c">当发现有</span> UserDetailsService.class <span class="c">这个</span>bean<span class="c">的时候</span>, UserDetailsServiceAutoConfiguration <span class="c">就会失效</span></span></div>
<div class="code" style="left:637px;top:291.25px"><span class="a">    @Bean</span></div>
<div class="code" style="left:637px;top:317.50px"><span class="k">    public </span>UserDetailsService <span class="m">userDetailsService</span>() <span style="background:#3a3a3a;color:#8a9199;outline:1px solid #3f3f3f">{...}</span></div>
<div class="code" style="left:637px;top:370.00px"><span class="cm">    // <span class="c">方式一</span>: springboot <span class="c">对</span> security <span class="c">默认配置中</span>,<span class="c">进行自动配置时</span>,<span class="c">自动在工厂中创建全局</span> AuthenticationManager</span></div>
<div class="code" style="left:637px;top:396.25px"><span class="cm">    // <span class="c">相当于将默认已注入的</span>bean<span class="c">进行属性设置</span>,<span class="c">不妨直接创建一个</span>bean ===&gt; UserDetailsService <span class="c">使得默认配置失效即可</span></span></div>
<div class="code" style="left:637px;top:422.50px"><span class="a">    @Autowired</span></div>
<div class="code" style="left:637px;top:448.75px"><span class="k">    public void </span><span class="m">initialize</span>(AuthenticationManagerBuilder builder) <span class="k">throws </span><span class="cm">Exception</span> {</div>
<div class="code" style="left:637px;top:475.00px">        System.<span class="sf">out</span>.println(<span class="s">&quot;springboot<span class="c">默认配置</span>: &quot;</span> + builder)<span class="k">;</span></div>
<div class="code" style="left:637px;top:501.25px">    }</div>
<div class="code" style="left:637px;top:553.75px"><span class="cm">    // <span class="c">方式二</span>: <span class="c">自定义</span> AuthenticationManager(<span class="c">推荐</span>)</span></div>
<div class="code" style="left:637px;top:580.00px"><span class="cm">    // <span class="c">自定义的</span> AuthenticationManager <span class="c">将会覆盖默认的配置</span>,<span class="c">优先级更高</span></span></div>
<div class="code" style="left:637px;top:606.25px"><span class="a">    @Override</span></div>
<div class="code" style="left:637px;top:632.50px"><span class="k">    public void </span><span class="m">configure</span>(AuthenticationManagerBuilder builder) <span class="k">throws </span><span class="cm">Exception</span> {</div>
<div class="code" style="left:637px;top:658.75px">        System.<span class="sf">out</span>.println(<span class="s">&quot;<span class="c">自定义</span>AuthenticationManager: &quot;</span> + builder)<span class="k">;</span></div>
<div class="code" style="left:637px;top:685.00px">    }</div>
<div class="code" style="left:637px;top:737.50px"><span class="a">    @Override</span></div>
<div class="code" style="left:637px;top:763.75px"><span class="k">    protected void </span><span class="m">configure</span>(HttpSecurity http) <span class="k">throws </span>Exception <span style="background:#3a3a3a;color:#8a9199;outline:1px solid #3f3f3f">{...}</span></div>
<div class="code" style="left:637px;top:816.25px">}</div>
<div class="b" style="left:676px;top:474px;width:1px;height:26px;background:#3b3b3b;"></div>
<div class="b" style="left:676px;top:657px;width:1px;height:26px;background:#3b3b3b;"></div>
<svg class="b" style="left:622px;top:114px;" width="13" height="15" viewBox="0 0 13 15"><path fill="#313335" stroke="#606060" stroke-width="1" d="M1.5,0.5 H11.5 V8 L6.5,13.5 L1.5,8 Z"/><path stroke="#6e6e6e" stroke-width="1" d="M4,5 H9"/></svg>
<svg class="b" style="left:622px;top:376px;" width="13" height="15" viewBox="0 0 13 15"><path fill="#313335" stroke="#606060" stroke-width="1" d="M1.5,0.5 H11.5 V8 L6.5,13.5 L1.5,8 Z"/><path stroke="#6e6e6e" stroke-width="1" d="M4,5 H9"/></svg>
<svg class="b" style="left:622px;top:455px;" width="13" height="15" viewBox="0 0 13 15"><path fill="#313335" stroke="#606060" stroke-width="1" d="M1.5,0.5 H11.5 V8 L6.5,13.5 L1.5,8 Z"/><path stroke="#6e6e6e" stroke-width="1" d="M4,5 H9"/></svg>
<svg class="b" style="left:622px;top:560px;" width="13" height="15" viewBox="0 0 13 15"><path fill="#313335" stroke="#606060" stroke-width="1" d="M1.5,0.5 H11.5 V8 L6.5,13.5 L1.5,8 Z"/><path stroke="#6e6e6e" stroke-width="1" d="M4,5 H9"/></svg>
<svg class="b" style="left:622px;top:639px;" width="13" height="15" viewBox="0 0 13 15"><path fill="#313335" stroke="#606060" stroke-width="1" d="M1.5,0.5 H11.5 V8 L6.5,13.5 L1.5,8 Z"/><path stroke="#6e6e6e" stroke-width="1" d="M4,5 H9"/></svg>
<svg class="b" style="left:622px;top:164px;" width="13" height="15" viewBox="0 0 13 15"><path fill="#313335" stroke="#606060" stroke-width="1" d="M1.5,14.5 H11.5 V7 L6.5,1.5 L1.5,7 Z"/><path stroke="#6e6e6e" stroke-width="1" d="M4,10 H9"/></svg>
<svg class="b" style="left:622px;top:400px;" width="13" height="15" viewBox="0 0 13 15"><path fill="#313335" stroke="#606060" stroke-width="1" d="M1.5,14.5 H11.5 V7 L6.5,1.5 L1.5,7 Z"/><path stroke="#6e6e6e" stroke-width="1" d="M4,10 H9"/></svg>
<svg class="b" style="left:622px;top:505px;" width="13" height="15" viewBox="0 0 13 15"><path fill="#313335" stroke="#606060" stroke-width="1" d="M1.5,14.5 H11.5 V7 L6.5,1.5 L1.5,7 Z"/><path stroke="#6e6e6e" stroke-width="1" d="M4,10 H9"/></svg>
<svg class="b" style="left:622px;top:584px;" width="13" height="15" viewBox="0 0 13 15"><path fill="#313335" stroke="#606060" stroke-width="1" d="M1.5,14.5 H11.5 V7 L6.5,1.5 L1.5,7 Z"/><path stroke="#6e6e6e" stroke-width="1" d="M4,10 H9"/></svg>
<svg class="b" style="left:622px;top:689px;" width="13" height="15" viewBox="0 0 13 15"><path fill="#313335" stroke="#606060" stroke-width="1" d="M1.5,14.5 H11.5 V7 L6.5,1.5 L1.5,7 Z"/><path stroke="#6e6e6e" stroke-width="1" d="M4,10 H9"/></svg>
<svg class="b" style="left:622px;top:323px;" width="13" height="13" viewBox="0 0 13 13"><rect x="1.5" y="1.5" width="10" height="10" fill="#313335" stroke="#606060"/><path stroke="#6e6e6e" stroke-width="1" d="M4,6.5 H9 M6.5,4 V9"/></svg>
<svg class="b" style="left:622px;top:769px;" width="13" height="13" viewBox="0 0 13 13"><rect x="1.5" y="1.5" width="10" height="10" fill="#313335" stroke="#606060"/><path stroke="#6e6e6e" stroke-width="1" d="M4,6.5 H9 M6.5,4 V9"/></svg>
<svg class="b" style="left:574px;top:187px;" width="20" height="20" viewBox="0 0 20 20"><circle cx="9.5" cy="10.5" r="7.5" fill="#509b3c"/><path stroke="#313335" stroke-width="1.6" fill="none" d="M3.2,4.2 L14.6,16.2"/><path fill="none" stroke="#313335" stroke-width="4" d="M9.6,4.6 L12,7.2 L16.8,2"/><path fill="none" stroke="#c8d2dc" stroke-width="1.7" d="M9.6,4.6 L12,7.2 L16.8,2"/></svg>
<svg class="b" style="left:574px;top:214px;" width="20" height="20" viewBox="0 0 20 20"><circle cx="9.5" cy="10.5" r="7.5" fill="#509b3c"/><path stroke="#313335" stroke-width="1.6" fill="none" d="M3.2,4.2 L14.6,16.2"/><circle cx="12.8" cy="13.8" r="4.6" fill="#313335"/><circle cx="12.8" cy="13.8" r="3.9" fill="#3a8fb8"/><path fill="none" stroke="#1d3442" stroke-width="1.1" d="M14.3,12.6 A1.9,1.9 0 1 0 14.3,15"/><path fill="#c8c8c8" d="M13,16.2 H18.6 L15.8,19 Z"/></svg>
<svg class="b" style="left:574px;top:292px;" width="20" height="20" viewBox="0 0 20 20"><circle cx="9.5" cy="10.5" r="7.5" fill="#509b3c"/><path stroke="#313335" stroke-width="1.6" fill="none" d="M3.2,4.2 L14.6,16.2"/><path fill="#313335" d="M-0.5,14.8 L6,9.8 V12.2 H10.5 V17.4 H6 V19.8 Z"/><path fill="#c8d2dc" d="M1,14.8 L5.2,11.6 V13.8 H9.6 V15.8 H5.2 V18 Z"/></svg>
<svg class="b" style="left:593px;top:292px;" width="20" height="20" viewBox="0 0 20 20"><circle cx="9.5" cy="10.5" r="7.5" fill="#509b3c"/><path stroke="#313335" stroke-width="1.6" fill="none" d="M3.2,4.2 L14.6,16.2"/><path fill="none" stroke="#313335" stroke-width="4" d="M9.6,4.6 L12,7.2 L16.8,2"/><path fill="none" stroke="#c8d2dc" stroke-width="1.7" d="M9.6,4.6 L12,7.2 L16.8,2"/></svg>
<svg class="b" style="left:574px;top:319px;" width="20" height="20" viewBox="0 0 20 20"><circle cx="7" cy="9.5" r="3.9" fill="none" stroke="#3a95c0" stroke-width="2.6"/><circle cx="7" cy="9.5" r="0.9" fill="#3a95c0"/><path stroke="#d9534f" stroke-width="1.7" fill="none" d="M14.2,17.5 V5"/><path fill="#d9534f" d="M10.6,7.6 L14.2,2.2 L17.8,7.6 Z"/></svg>
<svg class="b" style="left:574px;top:450px;" width="20" height="20" viewBox="0 0 20 20"><circle cx="9.5" cy="10.5" r="7.5" fill="#509b3c"/><path stroke="#313335" stroke-width="1.6" fill="none" d="M3.2,4.2 L14.6,16.2"/><path fill="#313335" d="M19.5,14.8 L13,9.8 V12.2 H8.5 V17.4 H13 V19.8 Z"/><path fill="#c8d2dc" d="M18,14.8 L13.8,11.6 V13.8 H9.4 V15.8 H13.8 V18 Z"/></svg>
<svg class="b" style="left:574px;top:634px;" width="20" height="20" viewBox="0 0 20 20"><circle cx="7" cy="9.5" r="3.9" fill="none" stroke="#3a95c0" stroke-width="2.6"/><circle cx="7" cy="9.5" r="0.9" fill="#3a95c0"/><path stroke="#d9534f" stroke-width="1.7" fill="none" d="M14.2,17.5 V5"/><path fill="#d9534f" d="M10.6,7.6 L14.2,2.2 L17.8,7.6 Z"/></svg>
<svg class="b" style="left:574px;top:765px;" width="20" height="20" viewBox="0 0 20 20"><circle cx="7" cy="9.5" r="3.9" fill="none" stroke="#3a95c0" stroke-width="2.6"/><circle cx="7" cy="9.5" r="0.9" fill="#3a95c0"/><path stroke="#d9534f" stroke-width="1.7" fill="none" d="M14.2,17.5 V5"/><path fill="#d9534f" d="M10.6,7.6 L14.2,2.2 L17.8,7.6 Z"/></svg>
<span class="t" style="left:595px;top:762.25px;font-size:16px;line-height:26px;color:#c8c8c8">@</span>
<div class="b" style="left:1800px;top:109px;width:90px;height:27px;background:#2b2b2b;"></div>
<svg class="b" style="left:1806px;top:115px;" width="16" height="16" viewBox="0 0 16 16"><path fill="#d6a41c" d="M8,1 L15.5,15 H0.5 Z"/><path stroke="#2b2b2b" stroke-width="1.8" d="M8,5.5 V10.5 M8,11.8 V13.6"/></svg>
<span class="t" style="left:1826px;top:111.80px;line-height:22px;font-size:15px;color:#bbbbbb;">5</span>
<svg class="b" style="left:1846px;top:116px;" width="14" height="12" viewBox="0 0 14 12"><path fill="none" stroke="#afb1b3" stroke-width="1.5" d="M2,9 L7,4 L12,9"/></svg>
<svg class="b" style="left:1872px;top:117px;" width="14" height="12" viewBox="0 0 14 12"><path fill="none" stroke="#afb1b3" stroke-width="1.5" d="M2,4 L7,9 L12,4"/></svg>
<div class="b" style="left:1882px;top:421px;width:10px;height:455px;background:#535353;"></div>
<div class="b" style="left:1876px;top:256px;width:17px;height:3px;background:#be9117;"></div>
<div class="b" style="left:1876px;top:374px;width:17px;height:3px;background:#be9117;"></div>
<div class="b" style="left:1876px;top:389px;width:17px;height:3px;background:#be9117;"></div>
<div class="b" style="left:1876px;top:610px;width:17px;height:3px;background:#be9117;"></div>
<div class="b" style="left:1876px;top:712px;width:17px;height:3px;background:#be9117;"></div>
<div class="b" style="left:27px;top:920px;width:1867px;height:57px;background:#3c3f41;"></div>
<div class="b" style="left:27px;top:920px;width:1867px;height:1px;background:#323232;"></div>
<div class="b" style="left:27px;top:954px;width:1867px;height:1px;background:#323232;"></div>
<span class="t" style="left:35px;top:927.80px;line-height:22px;font-size:15px;letter-spacing:0.329px;">Run:</span>
<svg class="b" style="left:91px;top:928px" width="20" height="20" viewBox="0 0 16 16"><path fill="#5fa34a" d="M0.8,12.6 C0.2,7.4 3.4,4.6 8.4,4 C10.6,3.7 12.6,2.8 13.6,1.6 C14.8,5.4 14.2,9 12.2,11 C9.6,13.4 5.4,13.4 3,12.2 C2.4,12.8 1.8,13.4 1.2,13.8 Z"/><path fill="#3c3f41" d="M10.6,7 L14.4,9.2 V13.6 L10.6,15.8 L6.8,13.6 V9.2 Z"/><path fill="#b8c2c9" d="M10.6,7.8 L13.7,9.6 V13.2 L10.6,15 L7.5,13.2 V9.6 Z"/><circle cx="10.6" cy="11.6" r="1.7" fill="none" stroke="#3c3f41" stroke-width="0.9"/><rect x="10.15" y="9.2" width="0.9" height="2.4" fill="#3c3f41"/><circle cx="13.4" cy="13.9" r="2.2" fill="#2edb2e"/></svg>
<span class="t" style="left:116px;top:927.80px;line-height:22px;font-size:15px;letter-spacing:0.792px;">SpringSecurity02Application</span>
<svg class="b" style="left:333px;top:933px;" width="12" height="12" viewBox="0 0 12 12"><path fill="none" stroke="#7a7e80" stroke-width="1.2" d="M2,2 L10,10 M10,2 L2,10"/></svg>
<div class="b" style="left:77px;top:951px;width:281px;height:4px;background:#747a80;"></div>
<svg class="b" style="left:1836px;top:929px;" width="18" height="18" viewBox="0 0 18 18"><path fill="#afb1b3" d="M7.03,3.33 L7.78,0.89 L10.22,0.89 L10.97,3.33 L12.92,4.46 L15.41,3.89 L16.63,6.00 L14.89,7.88 L14.89,10.12 L16.63,12.00 L15.41,14.11 L12.92,13.54 L10.97,14.67 L10.22,17.11 L7.78,17.11 L7.03,14.67 L5.08,13.54 L2.59,14.11 L1.37,12.00 L3.11,10.12 L3.11,7.88 L1.37,6.00 L2.59,3.89 L5.08,4.46 Z"/><circle cx="9" cy="9" r="2.7" fill="#3c3f41"/></svg>
<div class="b" style="left:1870px;top:936.6px;width:15.6px;height:2.8px;background:#afb1b3;"></div>
<div class="clip" style="left:28px;top:955px;width:1866px;height:21px">
<div class="b" style="left:34px;top:0px;width:1px;height:21px;background:#323232;"></div>
<svg class="b" style="left:13px;top:5px;" width="12" height="10" viewBox="0 0 12 10"><path fill="none" stroke="#afb1b3" stroke-width="1.1" d="M1.5,1 L5,5 L1.5,9 M6.5,1 L10,5 L6.5,9"/></svg>
<svg class="b" style="left:53px;top:12px;" width="15" height="14" viewBox="0 0 15 14"><rect x="0" y="0" width="15" height="14" fill="#afb1b3"/><path fill="none" stroke="#3c3f41" stroke-width="1.8" d="M3.5,3 L7.5,7 L3.5,11"/></svg>
<span class="t" style="left:76px;top:7.80px;line-height:22px;font-size:15px;letter-spacing:-0.719px;">Console</span>
<svg class="b" style="left:152px;top:8px;" width="22" height="22" viewBox="0 0 22 22"><circle cx="11" cy="4.5" r="3" fill="#c75b2a"/><path fill="none" stroke="#c75b2a" stroke-width="1.4" d="M1,9 L5,17 L10,8 M12,8 L16,17 L20,9"/></svg>
<span class="t" style="left:176px;top:7.80px;line-height:22px;font-size:15px;letter-spacing:-0.524px;">Endpoints</span>
</div>
<div class="b" style="left:0px;top:976px;width:1920px;height:1px;background:#323232;"></div>
<div class="b" style="left:0px;top:977px;width:1920px;height:27px;background:#3c3f41;"></div>
<div class="b" style="left:27px;top:977px;width:67px;height:27px;background:#2d2f30;"></div>
<div class="b" style="left:0px;top:1004px;width:1920px;height:1px;background:#323232;"></div>
<svg class="b" style="left:39px;top:985px;" width="16" height="16" viewBox="0 0 16 16"><path fill="#afb1b3" d="M1,1 L12,7.5 L1,14 Z"/><circle cx="12" cy="13" r="2.6" fill="#2edb2e"/></svg>
<span class="t" style="left:59px;top:981.80px;line-height:22px;font-size:14.5px;color:#ffffff;letter-spacing:-0.867px;">Run</span>
<svg class="b" style="left:106px;top:984px;" width="17" height="18" viewBox="0 0 17 18"><g fill="#afb1b3"><path d="M4,7.2 H13 V12.5 A4.5,4.8 0 0 1 4,12.5 Z"/><path d="M5,6.2 A3.5,3.6 0 0 1 12,6.2 Z"/></g><path fill="none" stroke="#afb1b3" stroke-width="1.9" d="M4.5,9 L1.6,7.4 M12.5,9 L15.4,7.4 M4,11.6 H1 M13,11.6 H16 M4.6,14.2 L1.8,16 M12.4,14.2 L15.2,16 M6.6,3.6 L5.4,1.4 M10.4,3.6 L11.6,1.4"/></svg>
<span class="t" style="left:128px;top:981.80px;line-height:22px;font-size:14.5px;color:#bbbbbb;letter-spacing:-0.346px;">Debug</span>
<svg class="b" style="left:195px;top:986px;" width="14" height="13" viewBox="0 0 14 13"><g fill="#afb1b3"><rect x="0" y="0.5" width="2.4" height="2.4"/><rect x="4" y="0.5" width="10" height="2.4"/><rect x="0" y="5.2" width="2.4" height="2.4"/><rect x="4" y="5.2" width="10" height="2.4"/><rect x="0" y="9.9" width="2.4" height="2.4"/><rect x="4" y="9.9" width="10" height="2.4"/></g></svg>
<span class="t" style="left:215px;top:981.80px;line-height:22px;font-size:14.5px;color:#bbbbbb;letter-spacing:-0.656px;">TODO</span>
<svg class="b" style="left:280px;top:985px;" width="14" height="14" viewBox="0 0 14 14"><circle cx="7" cy="7" r="6.6" fill="#afb1b3"/><path stroke="#3c3f41" stroke-width="1.8" d="M7,3 V8 M7,9.4 V11.2"/></svg>
<span class="t" style="left:300px;top:981.80px;line-height:22px;font-size:14.5px;color:#bbbbbb;letter-spacing:-0.530px;">Problems</span>
<svg class="b" style="left:384px;top:985px;" width="15" height="14" viewBox="0 0 15 14"><rect x="0" y="0" width="15" height="14" fill="#afb1b3"/><path fill="none" stroke="#3c3f41" stroke-width="1.5" d="M3,3.5 L6.5,7 L3,10.5 M8,10.5 H12"/></svg>
<span class="t" style="left:405px;top:981.80px;line-height:22px;font-size:14.5px;color:#bbbbbb;letter-spacing:-0.349px;">Terminal</span>
<svg class="b" style="left:480px;top:983px;" width="18" height="18" viewBox="0 0 18 18"><circle cx="7.5" cy="7.5" r="6" fill="none" stroke="#afb1b3" stroke-width="1.7"/><path fill="none" stroke="#afb1b3" stroke-width="1.4" d="M7.5,3.5 V7.5 L10,9.5"/><path fill="#afb1b3" d="M9.5,8 L17.5,12.7 L9.5,17.4 Z" stroke="#3c3f41" stroke-width="0.8"/></svg>
<span class="t" style="left:503px;top:981.80px;line-height:22px;font-size:14.5px;color:#bbbbbb;letter-spacing:-0.241px;">Profiler</span>
<svg class="b" style="left:571px;top:983px;" width="19" height="18" viewBox="0 0 19 18"><g fill="#afb1b3"><circle cx="9.5" cy="3.6" r="3.2"/><circle cx="3.6" cy="14" r="3.2"/><circle cx="15.4" cy="14" r="3.2"/></g><path stroke="#afb1b3" stroke-width="1.4" fill="none" d="M8,5 L4.5,12 M11,5 L14.5,12"/></svg>
<span class="t" style="left:594px;top:981.80px;line-height:22px;font-size:14.5px;color:#bbbbbb;letter-spacing:-0.388px;">Endpoints</span>
<svg class="b" style="left:679px;top:983px;" width="17" height="17" viewBox="0 0 17 17"><path fill="#afb1b3" d="M1,5 L5,1 L9,1 L10,2.5 L8,3 L7,4.6 L16,13.6 L14,15.6 L5,6.6 L3.4,7.6 Z"/></svg>
<span class="t" style="left:701px;top:981.80px;line-height:22px;font-size:14.5px;color:#bbbbbb;letter-spacing:-0.449px;">Build</span>
<svg class="b" style="left:755px;top:985px;" width="17" height="14" viewBox="0 0 17 14"><path fill="#afb1b3" d="M1,10.4 C0.4,5.4 5.6,2.6 10,2.4 C12.6,2.2 14.6,1.6 15.8,0.6 C16.6,4.6 15.4,8.4 12.6,10.2 C9.6,12.2 5.2,12 3,11 C2.4,11.8 1.8,12.4 1.2,12.8 Z"/></svg>
<span class="t" style="left:776px;top:981.80px;line-height:22px;font-size:14.5px;color:#bbbbbb;letter-spacing:-0.319px;">Spring</span>
<svg class="b" style="left:1798px;top:983px;" width="18" height="18" viewBox="0 0 18 18"><path fill="none" stroke="#afb1b3" stroke-width="1.7" d="M15.5,15.5 H8.5 A7,7 0 1 1 15.5,8.5 Z"/></svg>
<span class="t" style="left:1820px;top:981.80px;line-height:22px;font-size:14.5px;color:#bbbbbb;letter-spacing:-0.478px;">Event Log</span>
<div class="b" style="left:0px;top:1005px;width:1920px;height:26px;background:#3c3f41;"></div>
<svg class="b" style="left:7px;top:1010px;" width="16" height="16" viewBox="0 0 16 16"><path fill="none" stroke="#afb1b3" stroke-width="1.3" d="M3.7,0.7 H15.3 V12.3 H3.7 Z M0.7,3.5 V15.3 H12.5"/></svg>
<span class="t" style="left:34px;top:1006.80px;line-height:22px;font-size:15px;letter-spacing:0.502px;">Build completed successfully in 1 sec, 237 ms (21 minutes ago)</span>
<svg class="b" style="left:1617px;top:1007px;" width="24" height="22" viewBox="0 0 24 22"><path fill="#afb1b3" d="M5.5,14.5 A4,4 0 0 1 5,6.6 A5.6,5.6 0 0 1 15.8,5.4 A4.6,4.6 0 0 1 18,14 L12,14.5 Z"/><text x="7.6" y="12.6" font-family="Liberation Sans,sans-serif" font-weight="bold" font-size="9.5" fill="#3c3f41">?</text><circle cx="17.5" cy="16.5" r="4.6" fill="#3c3f41"/><g fill="#afb1b3"><circle cx="17.5" cy="16.5" r="2.8"/><rect x="16.7" y="12.4" width="1.6" height="8.2"/><rect x="16.7" y="12.4" width="1.6" height="8.2" transform="rotate(60 17.5 16.5)"/><rect x="16.7" y="12.4" width="1.6" height="8.2" transform="rotate(120 17.5 16.5)"/></g><circle cx="17.5" cy="16.5" r="1.1" fill="#3c3f41"/></svg>
<span class="t" style="left:1650px;top:1006.80px;line-height:22px;font-size:15px;letter-spacing:0.493px;">28:52</span>
<span class="t" style="left:1705px;top:1006.80px;line-height:22px;font-size:15px;letter-spacing:-0.793px;">CRLF</span>
<span class="t" style="left:1756px;top:1006.80px;line-height:22px;font-size:15px;letter-spacing:-0.099px;">UTF-8</span>
<span class="t" style="left:1814px;top:1006.80px;line-height:22px;font-size:15px;letter-spacing:0.245px;">4 spaces</span>
<svg class="b" style="left:1893px;top:1011px;" width="12" height="13" viewBox="0 0 12 13"><rect x="0" y="4" width="11" height="9" fill="#afb1b3"/><path fill="none" stroke="#afb1b3" stroke-width="1.6" d="M5.5,4.5 V3.4 A3,3 0 0 1 11.2,2.4"/></svg>
<div class="b" style="left:0px;top:1029px;width:1920px;height:1px;background:#9c9d9e;"></div>
<div class="b" style="left:0px;top:1030px;width:1920px;height:1px;background:#e9e9e9;"></div>
<div class="b" style="left:659px;top:357.3px;width:935px;height:166.5px;border:4.6px solid #ff2314;border-radius:7px"></div>
<div class="b" style="left:657px;top:539px;width:936px;height:168.7px;border:4.6px solid #ff2314;border-radius:7px 7px 4px 7px"></div>
<span class="t note" style="left:1619.6px;top:405.5px">工厂中，默认情况下不允</span>
<span class="t note" style="left:1619.6px;top:437.5px">许出现两个</span>
<span class="t note" style="left:1619.6px;top:469.5px"><span style="letter-spacing:1.19px">AuthenticationManager</span></span>
<span class="t note" style="left:1619.6px;top:501.5px">，一旦有自定义的配置（</span>
<span class="t note" style="left:1619.6px;top:533.5px">左边<span style="letter-spacing:1.05px">configure()</span>函数），</span>
<span class="t note" style="left:1619.6px;top:565.5px">那么将会覆盖<span style="letter-spacing:1.03px">SpringBoot</span></span>
<span class="t note" style="left:1619.6px;top:597.5px">自动创建的</span>
<span class="t note" style="left:1619.6px;top:629.5px"><span style="letter-spacing:1.19px">AuthenticationManager</span></span>
<span class="t note" style="left:1619.6px;top:661.5px">（<span style="letter-spacing:0.78px">initialize()</span>函数注入）</span>
<span class="t" style="left:1768px;top:1001.5px;font-size:15px;letter-spacing:-0.15px;line-height:22px;color:rgba(255,255,255,.8);text-shadow:1px 1px 1px rgba(20,20,20,.9),-1px -1px 1px rgba(20,20,20,.7),1px -1px 1px rgba(20,20,20,.7),-1px 1px 1px rgba(20,20,20,.7)">CSDN @Naijia_OvO</span>
</div>
</body></html>
